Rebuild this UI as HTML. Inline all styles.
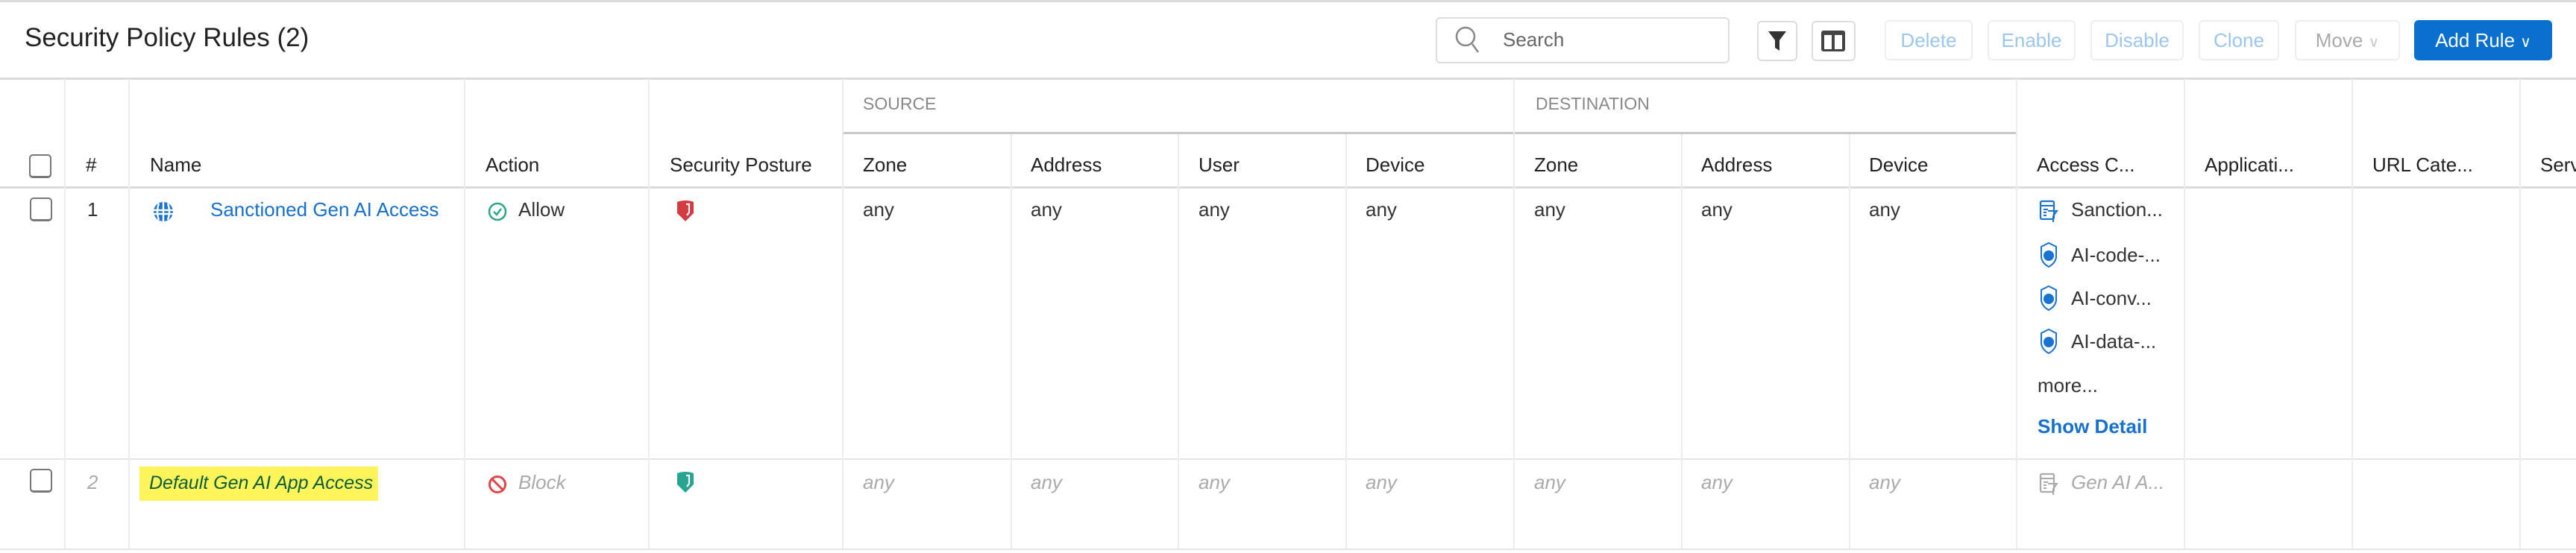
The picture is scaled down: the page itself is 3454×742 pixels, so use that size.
<!DOCTYPE html>
<html><head><meta charset="utf-8"><style>
*{margin:0;padding:0;box-sizing:border-box}
body{width:3454px;height:742px;background:#fff;font-family:"Liberation Sans",sans-serif;color:#333;position:relative;overflow:hidden}
.a{position:absolute;white-space:nowrap}
.t{font-size:26px;line-height:30px}
.h{font-size:26px;line-height:30px;color:#222;font-weight:500}
.vl{position:absolute;width:2px;background:#ececec}
.hl{position:absolute;height:3px;background:#dcdcdc;left:0;width:3454px}
.btn{position:absolute;top:27px;height:54px;border:2px solid #eee;border-radius:6px;font-size:26px;line-height:50px;text-align:center;color:#9cc6ee}
.cb{position:absolute;width:30px;height:32px;border:2px solid #777;border-radius:5px;border-bottom-width:3px}
.g{color:#aaa;font-style:italic}
</style></head><body>
<div class="hl" style="top:0;height:3px"></div>
<div class="a" style="left:33px;top:30px;font-size:35px;line-height:42px;color:#222">Security Policy Rules (2)</div>

<div class="a" style="left:1925px;top:23px;width:394px;height:62px;border:2px solid #ddd;border-radius:6px"></div>
<svg class="a" style="left:1950px;top:34px" width="36" height="40" viewBox="0 0 36 40"><circle cx="15" cy="15" r="12" fill="none" stroke="#888" stroke-width="2.5"/><line x1="24" y1="25" x2="32" y2="36" stroke="#888" stroke-width="2.5"/></svg>
<div class="a t" style="left:2015px;top:38px;color:#666">Search</div>
<div class="a" style="left:2356px;top:28px;width:54px;height:54px;border:2px solid #ddd;border-radius:6px"></div>
<svg class="a" style="left:2369px;top:40px" width="28" height="30" viewBox="0 0 28 30"><path d="M2 2H26L17 14V28L11 24V14Z" fill="#333"/></svg>
<div class="a" style="left:2429px;top:28px;width:59px;height:54px;border:2px solid #ddd;border-radius:6px"></div>
<svg class="a" style="left:2441px;top:40px" width="34" height="30" viewBox="0 0 34 30"><rect x="1" y="1" width="32" height="28" rx="3" fill="#444"/><rect x="5" y="7" width="10" height="19" fill="#fff"/><rect x="19" y="7" width="10" height="19" fill="#fff"/></svg>
<div class="btn" style="left:2527px;width:118px">Delete</div>
<div class="btn" style="left:2665px;width:118px">Enable</div>
<div class="btn" style="left:2803px;width:125px">Disable</div>
<div class="btn" style="left:2948px;width:108px">Clone</div>
<div class="btn" style="left:3077px;width:141px;color:#aaa">Move <span style="color:#ccc;font-size:20px">&#8744;</span></div>
<div class="btn" style="left:3237px;width:185px;background:#0a70d0;border-color:#0a70d0;color:#fff">Add Rule <span style="font-size:20px">&#8744;</span></div>

<div class="hl" style="top:104px"></div>
<div class="hl" style="top:250px"></div>
<div class="hl" style="top:615px;background:#e6e6e6;height:2px"></div>
<div class="hl" style="top:736px;background:#e6e6e6;height:2px"></div>
<div class="a" style="left:1130px;top:177px;width:1574px;height:3px;background:#c6c8cc"></div>

<div class="vl" style="left:86px;top:106px;height:630px"></div>
<div class="vl" style="left:172px;top:106px;height:630px"></div>
<div class="vl" style="left:622px;top:106px;height:630px"></div>
<div class="vl" style="left:869px;top:106px;height:630px"></div>
<div class="vl" style="left:1129px;top:106px;height:630px"></div>
<div class="vl" style="left:1355px;top:180px;height:556px"></div>
<div class="vl" style="left:1579px;top:180px;height:556px"></div>
<div class="vl" style="left:1804px;top:180px;height:556px"></div>
<div class="vl" style="left:2029px;top:106px;height:630px"></div>
<div class="vl" style="left:2254px;top:180px;height:556px"></div>
<div class="vl" style="left:2479px;top:180px;height:556px"></div>
<div class="vl" style="left:2703px;top:106px;height:630px"></div>
<div class="vl" style="left:2928px;top:106px;height:630px"></div>
<div class="vl" style="left:3153px;top:106px;height:630px"></div>
<div class="vl" style="left:3378px;top:106px;height:630px"></div>

<div class="a" style="left:1157px;top:126px;font-size:23px;color:#888">SOURCE</div>
<div class="a" style="left:2059px;top:126px;font-size:23px;color:#888">DESTINATION</div>

<div class="cb" style="left:39px;top:207px"></div>
<div class="a h" style="left:115px;top:206px">#</div>
<div class="a h" style="left:201px;top:206px">Name</div>
<div class="a h" style="left:651px;top:206px">Action</div>
<div class="a h" style="left:898px;top:206px">Security Posture</div>
<div class="a h" style="left:1157px;top:206px">Zone</div>
<div class="a h" style="left:1382px;top:206px">Address</div>
<div class="a h" style="left:1607px;top:206px">User</div>
<div class="a h" style="left:1831px;top:206px">Device</div>
<div class="a h" style="left:2057px;top:206px">Zone</div>
<div class="a h" style="left:2281px;top:206px">Address</div>
<div class="a h" style="left:2506px;top:206px">Device</div>
<div class="a h" style="left:2731px;top:206px">Access C...</div>
<div class="a h" style="left:2956px;top:206px">Applicati...</div>
<div class="a h" style="left:3181px;top:206px">URL Cate...</div>
<div class="a h" style="left:3406px;top:206px">Serv</div>

<!-- row1 -->
<div class="cb" style="left:40px;top:265px"></div>
<div class="a t" style="left:117px;top:266px">1</div>
<svg class="a" style="left:205px;top:270px" width="28" height="28" viewBox="0 0 28 28"><circle cx="14" cy="14" r="13" fill="#1a73d0"/><path d="M14 1V27M1 12H27M1 17H27M8 3Q4 14 8 25M20 3Q24 14 20 25" stroke="#fff" stroke-width="2.4" fill="none"/></svg>
<div class="a t" style="left:282px;top:266px;color:#1670cc">Sanctioned Gen AI Access</div>
<svg class="a" style="left:654px;top:270px" width="26" height="28" viewBox="0 0 26 28"><circle cx="13" cy="14" r="11" fill="none" stroke="#2aa58a" stroke-width="2.5"/><path d="M8 14L12 18L18 10" stroke="#2aa58a" stroke-width="2.5" fill="none"/></svg>
<div class="a t" style="left:695px;top:266px">Allow</div>
<svg class="a" style="left:906px;top:268px" width="26" height="30" viewBox="0 0 26 30"><path d="M2 3Q13 -1 24 3V18L13 29L2 18Z" fill="#d23b40"/><path d="M14 6H18V17L15 21" stroke="#fff" stroke-width="2.2" fill="none"/></svg>
<div class="a t" style="left:1157px;top:266px">any</div>
<div class="a t" style="left:1382px;top:266px">any</div>
<div class="a t" style="left:1607px;top:266px">any</div>
<div class="a t" style="left:1831px;top:266px">any</div>
<div class="a t" style="left:2057px;top:266px">any</div>
<div class="a t" style="left:2281px;top:266px">any</div>
<div class="a t" style="left:2506px;top:266px">any</div>

<svg class="a" style="left:2734px;top:268px" width="26" height="32" viewBox="0 0 26 32"><rect x="2" y="2" width="18" height="24" rx="2" fill="none" stroke="#1a73d0" stroke-width="2.2"/><path d="M2 8H20M6 13H12M6 17H10M6 21H10M12 15H24L19 22V30" stroke="#1a73d0" stroke-width="2" fill="none"/></svg>
<div class="a t" style="left:2777px;top:266px">Sanction...</div>
<svg class="a" style="left:2734px;top:325px" width="26" height="34" viewBox="0 0 26 34"><path d="M13 1L23 6V20Q22 28 13 33Q4 28 3 20V6Z" fill="none" stroke="#1a73d0" stroke-width="2"/><circle cx="13" cy="18" r="7" fill="#1a73d0"/></svg>
<div class="a t" style="left:2777px;top:327px">AI-code-...</div>
<svg class="a" style="left:2734px;top:383px" width="26" height="34" viewBox="0 0 26 34"><path d="M13 1L23 6V20Q22 28 13 33Q4 28 3 20V6Z" fill="none" stroke="#1a73d0" stroke-width="2"/><circle cx="13" cy="18" r="7" fill="#1a73d0"/></svg>
<div class="a t" style="left:2777px;top:385px">AI-conv...</div>
<svg class="a" style="left:2734px;top:441px" width="26" height="34" viewBox="0 0 26 34"><path d="M13 1L23 6V20Q22 28 13 33Q4 28 3 20V6Z" fill="none" stroke="#1a73d0" stroke-width="2"/><circle cx="13" cy="18" r="7" fill="#1a73d0"/></svg>
<div class="a t" style="left:2777px;top:443px">AI-data-...</div>
<div class="a t" style="left:2732px;top:502px">more...</div>
<div class="a t" style="left:2732px;top:557px;color:#1670cc;font-weight:bold">Show Detail</div>

<!-- row2 -->
<div class="cb" style="left:40px;top:629px"></div>
<div class="a t g" style="left:117px;top:632px">2</div>
<div class="a" style="left:187px;top:626px;width:320px;height:46px;background:#fff45a"></div>
<div class="a t" style="left:200px;top:633px;color:#0b5e3c;font-style:italic;font-size:25px">Default Gen AI App Access</div>
<svg class="a" style="left:654px;top:636px" width="26" height="28" viewBox="0 0 26 28"><circle cx="13" cy="14" r="10.5" fill="none" stroke="#e04646" stroke-width="3"/><line x1="6" y1="7" x2="20" y2="21" stroke="#e04646" stroke-width="3"/></svg>
<div class="a t g" style="left:695px;top:632px">Block</div>
<svg class="a" style="left:906px;top:632px" width="26" height="30" viewBox="0 0 26 30"><path d="M2 3Q13 -1 24 3V18L13 29L2 18Z" fill="#26a592"/><path d="M14 6H18V17L15 21" stroke="#fff" stroke-width="2.2" fill="none"/></svg>
<div class="a t g" style="left:1157px;top:632px">any</div>
<div class="a t g" style="left:1382px;top:632px">any</div>
<div class="a t g" style="left:1607px;top:632px">any</div>
<div class="a t g" style="left:1831px;top:632px">any</div>
<div class="a t g" style="left:2057px;top:632px">any</div>
<div class="a t g" style="left:2281px;top:632px">any</div>
<div class="a t g" style="left:2506px;top:632px">any</div>
<svg class="a" style="left:2734px;top:634px" width="26" height="32" viewBox="0 0 26 32"><rect x="2" y="2" width="18" height="24" rx="2" fill="none" stroke="#aaa" stroke-width="2.2"/><path d="M2 8H20M6 13H12M6 17H10M6 21H10M12 15H24L19 22V30" stroke="#aaa" stroke-width="2" fill="none"/></svg>
<div class="a t g" style="left:2777px;top:632px">Gen AI A...</div>
</body></html>
